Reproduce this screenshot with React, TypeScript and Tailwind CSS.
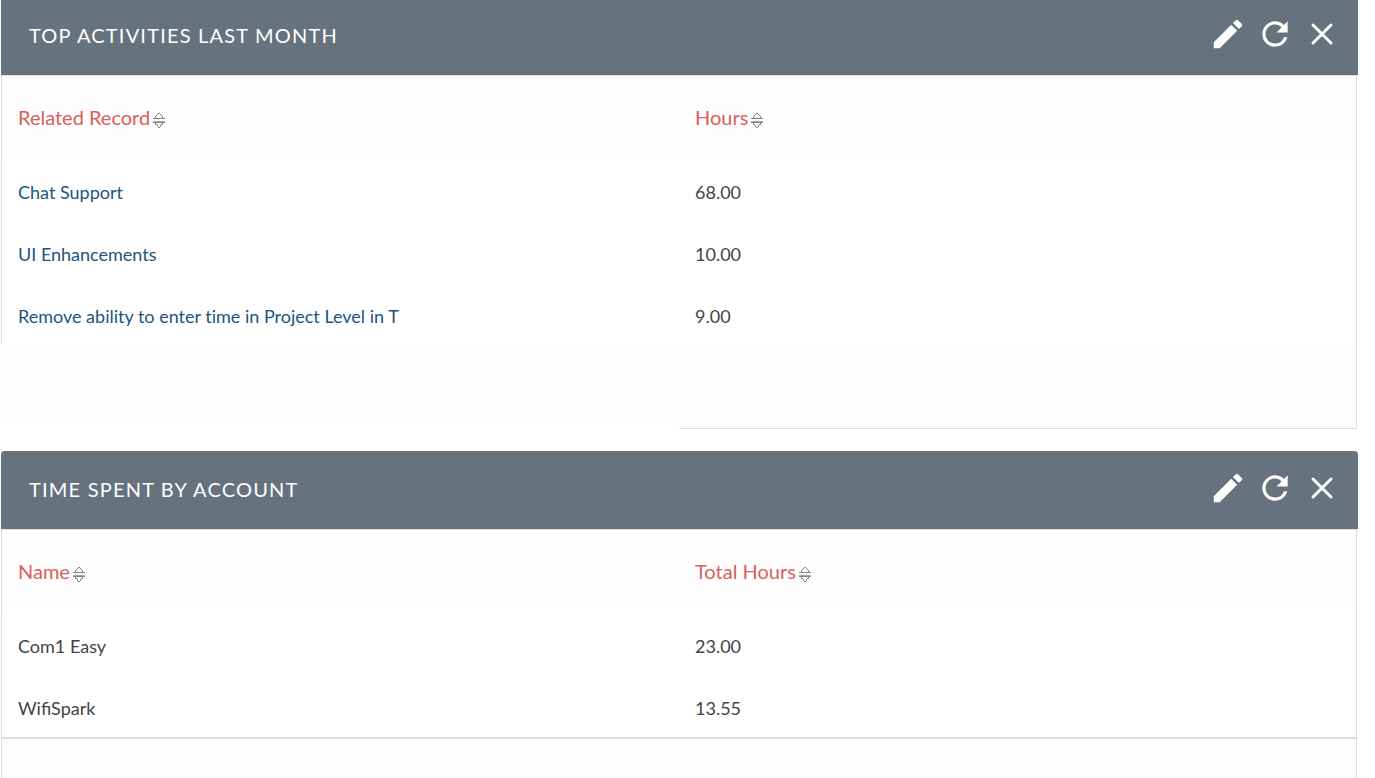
import { ReactNode } from "react";
import clsx from "clsx";
import { MdEdit, MdRefresh } from "react-icons/md";

type Row = {
  label: string;
  value: string;
  href?: string;
};

type DashletProps = {
  title: string;
  columns: [string, string];
  rows: Row[];
  headerClassName: string;
  tableClassName?: string;
  footer: ReactNode;
};

const activities: Row[] = [
  { label: "Chat Support", value: "68.00", href: "#chat-support" },
  { label: "UI Enhancements", value: "10.00", href: "#ui-enhancements" },
  {
    label: "Remove ability to enter time in Project Level in T",
    value: "9.00",
    href: "#project-level",
  },
];

const accounts: Row[] = [
  { label: "Com1 Easy", value: "23.00" },
  { label: "WifiSpark", value: "13.55" },
];

function SortIcon() {
  return (
    <svg
      width="12"
      height="15"
      viewBox="0 0 12 15"
      fill="#858585"
      shapeRendering="crispEdges"
      aria-hidden="true"
    >
      <path d="M5 0h2v1H5zM4 1h1v1H4zM7 1h1v1H7zM3 2h1v1H3zM8 2h1v1H8zM2 3h1v1H2zM9 3h1v1H9zM2 4h1v1H2zM9 4h1v1H9zM0 5h12v1H0z" />
      <path d="M0 9h12v1H0zM2 10h1v1H2zM9 10h1v1H9zM2 11h2v1H2zM8 11h2v1H8zM4 12h1v1H4zM7 12h1v1H7zM4 13h1v1H4zM7 13h1v1H7zM5 14h2v1H5z" />
      <path d="M0 8h12v1H0z" opacity="0.7" />
    </svg>
  );
}

function CloseIcon() {
  return (
    <svg
      width="38"
      height="38"
      viewBox="0 0 38 38"
      stroke="currentColor"
      strokeWidth="3"
      strokeLinecap="round"
      aria-hidden="true"
    >
      <path d="M10 10l18 18M28 10L10 28" />
    </svg>
  );
}

function Dashlet({ title, columns, rows, headerClassName, tableClassName, footer }: DashletProps) {
  return (
    <section>
      <header
        className={clsx(
          "flex items-center justify-between bg-[#66727e] pl-7 pr-[17px] text-white",
          headerClassName
        )}
      >
        <h2 className="pb-0.5 text-xl tracking-[0.06em] uppercase">{title}</h2>
        <div className="flex gap-[9px] pb-1">
          <button type="button" aria-label={`Edit ${title}`} className="cursor-pointer">
            <MdEdit className="size-[38px]" />
          </button>
          <button type="button" aria-label={`Refresh ${title}`} className="cursor-pointer">
            <MdRefresh className="size-[38px]" />
          </button>
          <button type="button" aria-label={`Close ${title}`} className="cursor-pointer">
            <CloseIcon />
          </button>
        </div>
      </header>

      <div className="mr-px border-t border-[#dddddd]">
        <div className={clsx("border-x border-[#dddddd]", tableClassName)}>
          <table className="w-full table-fixed text-left">
            <thead>
              <tr className="h-[83px] bg-[#fefefe]">
                {columns.map((column) => (
                  <th key={column} scope="col" className="px-4 pb-px font-normal">
                    <button
                      type="button"
                      className="flex cursor-pointer items-center gap-[3px] text-xl text-[#d9605a]"
                    >
                      {column}
                      <span className="pt-1.5">
                        <SortIcon />
                      </span>
                    </button>
                  </th>
                ))}
              </tr>
            </thead>
            <tbody>
              {rows.map((row) => (
                <tr key={row.label} className="h-[62px] text-lg text-[#444444]">
                  <td className="px-4 pt-1">
                    {row.href ? (
                      <a
                        href={row.href}
                        className="text-[#215480] [font-variant-ligatures:none] hover:underline"
                      >
                        {row.label}
                      </a>
                    ) : (
                      row.label
                    )}
                  </td>
                  <td className="px-4 pt-1">{row.value}</td>
                </tr>
              ))}
            </tbody>
          </table>
        </div>
        {footer}
      </div>
    </section>
  );
}

export default function App() {
  return (
    <main className="flex flex-col gap-[22px] bg-white pl-px pr-[17px] font-[Lato,sans-serif]">
      <Dashlet
        title="Top Activities Last Month"
        columns={["Related Record", "Hours"]}
        rows={activities}
        headerClassName="h-[75px] pb-1"
        footer={
          <div className="grid h-[84px] grid-cols-2 bg-[#fefefe]">
            <div />
            <div className="border-r border-b border-[#dddddd]" />
          </div>
        }
      />
      <Dashlet
        title="Time Spent by Account"
        columns={["Name", "Total Hours"]}
        rows={accounts}
        headerClassName="h-[78px] rounded-t"
        tableClassName="border-b-2"
        footer={<div className="h-[40px] border-x border-[#dddddd] bg-[#fefefe]" />}
      />
    </main>
  );
}
